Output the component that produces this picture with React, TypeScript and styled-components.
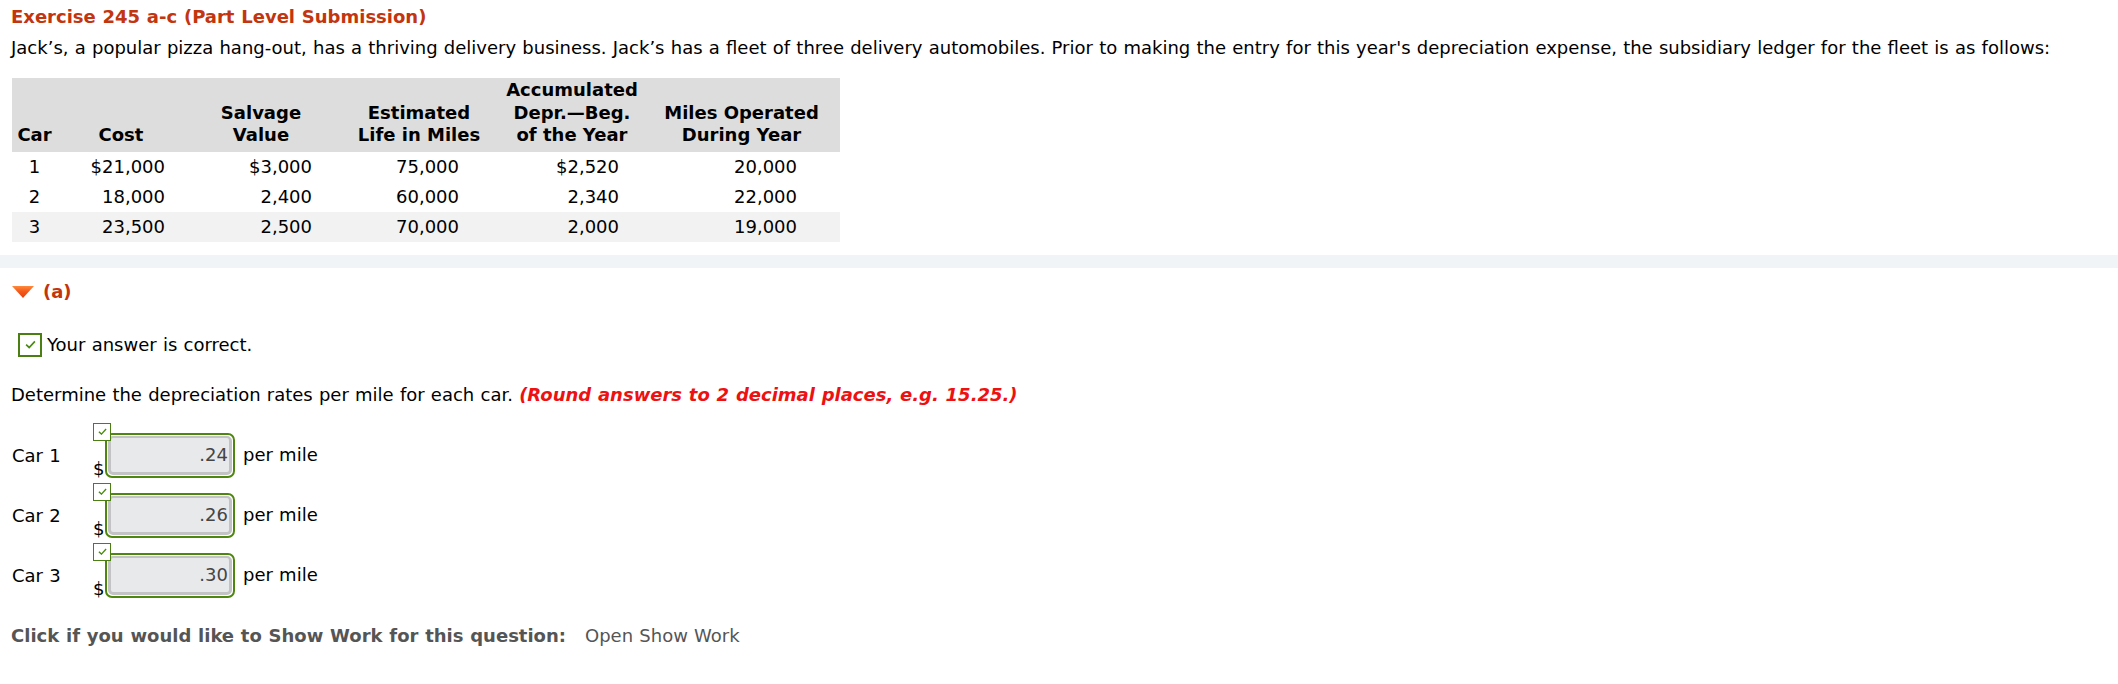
import React from "react";
import styled, { createGlobalStyle } from "styled-components";

const GlobalStyle = createGlobalStyle`
  html, body {
    margin: 0;
    padding: 0;
    background: #ffffff;
  }
  body {
    font-family: "DejaVu Sans", Verdana, sans-serif;
    font-size: 18px;
    color: #000000;
    word-spacing: 0.5px;
  }
`;

const Page = styled.div`
  padding-top: 6px;
  width: 2118px;
`;

const Title = styled.h1`
  margin: 0 0 9px 11px;
  font-size: 18px;
  line-height: 22px;
  font-weight: bold;
  color: #c2350f;
`;

const Intro = styled.p`
  margin: 0 0 19px 11px;
  font-size: 18px;
  line-height: 22px;
`;

const Ledger = styled.table`
  margin-left: 12px;
  border-collapse: collapse;
  table-layout: fixed;
  width: 828px;
  word-spacing: 0;
`;

const HeadCell = styled.th<{ $w: number }>`
  width: ${(p) => p.$w}px;
  background: #dddddd;
  font-weight: bold;
  text-align: center;
  vertical-align: bottom;
  line-height: 22.5px;
  padding: 1px 0 5px 0;
  white-space: nowrap;
`;

const BodyRow = styled.tr<{ $shade?: boolean }>`
  background: ${(p) => (p.$shade ? "#f2f2f2" : "#ffffff")};
`;

const BodyCell = styled.td<{ $pad: number; $center?: boolean }>`
  height: 30px;
  padding: 0 ${(p) => p.$pad}px 0 ${(p) => (p.$center ? p.$pad : 0)}px;
  text-align: ${(p) => (p.$center ? "center" : "right")};
  line-height: 29px;
  white-space: nowrap;
`;

const Band = styled.div`
  margin-top: 13px;
  height: 13px;
  background: #f1f4f7;
`;

const PartHead = styled.div`
  margin-top: 13px;
  display: flex;
  align-items: center;
  gap: 9px;
  padding-left: 12px;
  height: 22px;
`;

const PartLabel = styled.span`
  font-weight: bold;
  color: #c2350f;
  line-height: 22px;
`;

const CorrectRow = styled.div`
  margin-top: 30px;
  display: flex;
  align-items: center;
  gap: 5px;
  padding-left: 18px;
`;

const CheckBox = styled.span<{ $size: number; $bw: number }>`
  box-sizing: border-box;
  width: ${(p) => p.$size}px;
  height: ${(p) => p.$size}px;
  border: ${(p) => p.$bw}px solid #4b7f12;
  background: #ffffff;
  display: flex;
  align-items: center;
  justify-content: center;
  flex: none;
`;

const Instruction = styled.p`
  margin: 27px 0 0 11px;
  line-height: 22px;
`;

const Hint = styled.em`
  color: #ee1111;
  font-weight: bold;
`;

const Fields = styled.div`
  margin-top: 27px;
  display: flex;
  flex-direction: column;
  gap: 15px;
  padding-left: 12px;
`;

const FieldRow = styled.div`
  display: flex;
  align-items: center;
`;

const FieldLabel = styled.span`
  width: 81px;
  line-height: 22px;
  padding-top: 1px;
`;

const FieldWrap = styled.div`
  position: relative;
  display: flex;
  align-items: flex-end;
`;

const Badge = styled.span`
  position: absolute;
  left: 0;
  top: -10px;
  z-index: 2;
  display: flex;
`;

const Dollar = styled.span`
  width: 12px;
  line-height: 18px;
`;

const Frame = styled.div`
  box-sizing: border-box;
  width: 130px;
  height: 45px;
  border: 2px solid #4e870d;
  border-radius: 7px;
  padding: 1px;
  background: #ffffff;
`;

const AnswerInput = styled.input`
  box-sizing: border-box;
  width: 100%;
  height: 100%;
  margin: 0;
  border: 3px solid #c3c3c5;
  border-top-width: 2px;
  border-radius: 5px;
  background: #e8e9eb;
  text-align: right;
  padding: 0 1px 0 0;
  font-family: "DejaVu Sans", Verdana, sans-serif;
  font-size: 18px;
  color: #454545;
  outline: none;
`;

const PerMile = styled.span`
  margin-left: 8px;
  line-height: 22px;
`;

const ShowWork = styled.div`
  margin-top: 27px;
  padding-left: 11px;
  display: flex;
  gap: 19px;
  line-height: 22px;
  color: #555555;
`;

const ShowWorkLabel = styled.span`
  font-weight: bold;
`;

const ShowWorkLink = styled.span`
  color: #555555;
`;

const Check = ({ size, bw, w }: { size: number; bw: number; w: number }) => (
  <CheckBox $size={size} $bw={bw}>
    <svg width={w} height={w * 0.8} viewBox="0 0 10 8">
      <path d="M1 4.2 L3.8 6.8 L9 1.2" fill="none" stroke="#4b8a12" strokeWidth="1.5" />
    </svg>
  </CheckBox>
);

const Triangle = () => (
  <svg width="22" height="12" viewBox="0 0 22 12">
    <defs>
      <linearGradient id="tri" x1="0" y1="0" x2="0" y2="1">
        <stop offset="0" stopColor="#ff8a3c" />
        <stop offset="0.45" stopColor="#f5591a" />
        <stop offset="1" stopColor="#e2400a" />
      </linearGradient>
    </defs>
    <polygon points="0,0 22,0 11,12" fill="url(#tri)" />
  </svg>
);

const cols = [
  { w: 45, pad: 0, center: true, head: ["Car"] },
  { w: 128, pad: 20, head: ["Cost"] },
  { w: 152, pad: 25, head: ["Salvage", "Value"] },
  { w: 164, pad: 42, head: ["Estimated", "Life in Miles"] },
  { w: 142, pad: 24, head: ["Accumulated", "Depr.\u2014Beg.", "of the Year"] },
  { w: 197, pad: 43, head: ["Miles Operated", "During Year"] },
];

const rows = [
  ["1", "$21,000", "$3,000", "75,000", "$2,520", "20,000"],
  ["2", "18,000", "2,400", "60,000", "2,340", "22,000"],
  ["3", "23,500", "2,500", "70,000", "2,000", "19,000"],
];

const answers = [
  { car: "Car 1", value: ".24" },
  { car: "Car 2", value: ".26" },
  { car: "Car 3", value: ".30" },
];

export default function App() {
  return (
    <Page>
      <GlobalStyle />
      <Title>Exercise 245 a-c (Part Level Submission)</Title>
      <Intro>
        Jack’s, a popular pizza hang-out, has a thriving delivery business. Jack’s has a fleet of three
        delivery automobiles. Prior to making the entry for this year's depreciation expense, the
        subsidiary ledger for the fleet is as follows:
      </Intro>
      <Ledger>
        <thead>
          <tr>
            {cols.map((c, i) => (
              <HeadCell key={i} $w={c.w}>
                {c.head.map((line, j) => (
                  <React.Fragment key={j}>
                    {j > 0 && <br />}
                    {line}
                  </React.Fragment>
                ))}
              </HeadCell>
            ))}
          </tr>
        </thead>
        <tbody>
          {rows.map((r, i) => (
            <BodyRow key={i} $shade={i === 2}>
              {r.map((v, j) => (
                <BodyCell key={j} $pad={cols[j].pad} $center={cols[j].center}>
                  {v}
                </BodyCell>
              ))}
            </BodyRow>
          ))}
        </tbody>
      </Ledger>
      <Band />
      <PartHead>
        <Triangle />
        <PartLabel>(a)</PartLabel>
      </PartHead>
      <CorrectRow>
        <Check size={24} bw={2} w={11} />
        <span>Your answer is correct.</span>
      </CorrectRow>
      <Instruction>
        Determine the depreciation rates per mile for each car.{" "}
        <Hint>(Round answers to 2 decimal places, e.g. 15.25.)</Hint>
      </Instruction>
      <Fields>
        {answers.map((a) => (
          <FieldRow key={a.car}>
            <FieldLabel>{a.car}</FieldLabel>
            <FieldWrap>
              <Badge>
                <Check size={18} bw={1.5} w={9} />
              </Badge>
              <Dollar>$</Dollar>
              <Frame>
                <AnswerInput readOnly value={a.value} />
              </Frame>
            </FieldWrap>
            <PerMile>per mile</PerMile>
          </FieldRow>
        ))}
      </Fields>
      <ShowWork>
        <ShowWorkLabel>Click if you would like to Show Work for this question:</ShowWorkLabel>
        <ShowWorkLink>Open Show Work</ShowWorkLink>
      </ShowWork>
    </Page>
  );
}
